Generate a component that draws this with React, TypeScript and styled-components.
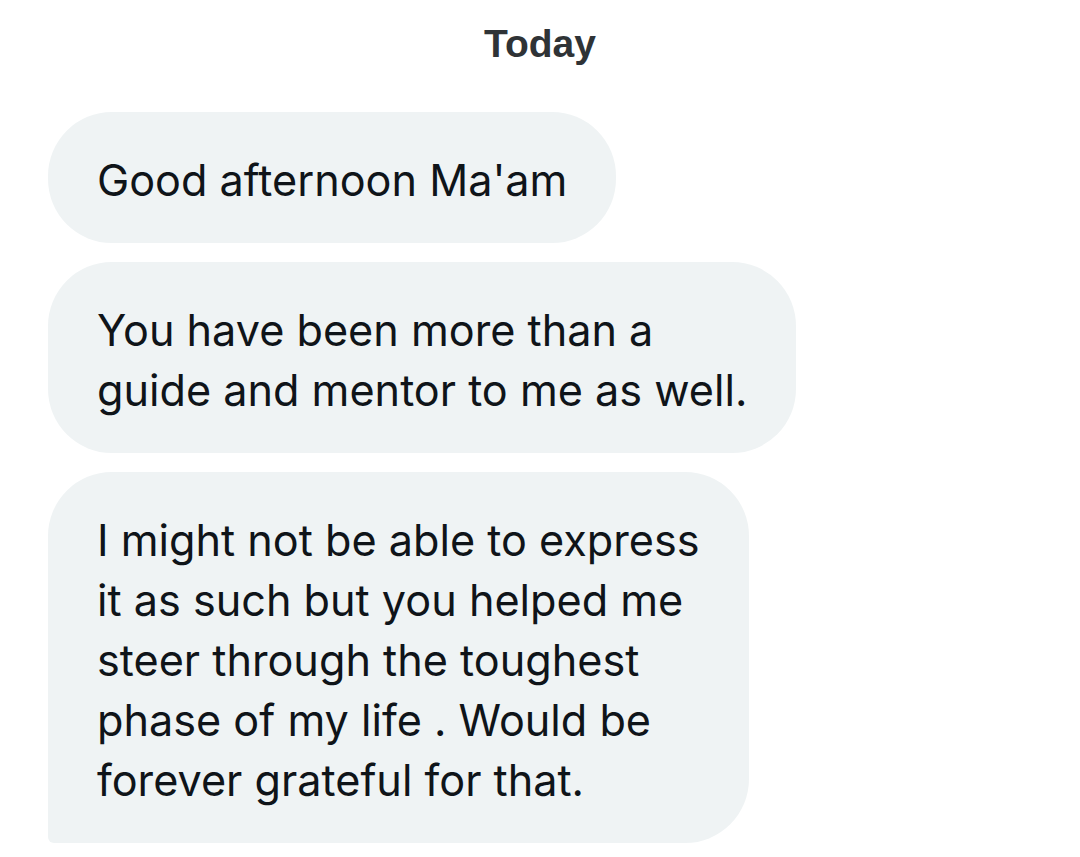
import React from "react";
import styled, { createGlobalStyle } from "styled-components";

const GlobalStyle = createGlobalStyle`
  html, body {
    margin: 0;
    padding: 0;
    background: #ffffff;
  }
  body {
    font-family: Inter, "Noto Sans", sans-serif;
  }
`;

const Page = styled.div`
  width: 1080px;
  height: 857px;
  overflow: hidden;
  background: #ffffff;
`;

const DayLabel = styled.div`
  height: 88px;
  display: flex;
  align-items: center;
  justify-content: center;
  font-family: "Liberation Sans", Arial, sans-serif;
  font-weight: 700;
  font-size: 39px;
  color: #2f3336;
`;

const Thread = styled.div`
  display: flex;
  flex-direction: column;
  align-items: flex-start;
  gap: 19px;
  padding: 24px 0 0 48px;
`;

const Bubble = styled.div<{ $last?: boolean }>`
  box-sizing: border-box;
  padding: 38px 49px 33px 49px;
  background: #eff3f4;
  color: #0f1419;
  font-size: 43.2px;
  line-height: 60px;
  white-space: pre-line;
  border-radius: ${(p) => (p.$last ? "64px 64px 64px 6px" : "64px")};
`;

const messages = [
  "Good afternoon Ma'am",
  "You have been more than a\nguide and mentor to me as well.",
  "I might not be able to express\nit as such but you helped me\nsteer through the toughest\nphase of my life . Would be\nforever grateful for that.",
];

export default function App() {
  return (
    <Page>
      <GlobalStyle />
      <DayLabel>Today</DayLabel>
      <Thread>
        {messages.map((m, i) => (
          <Bubble key={i} $last={i === messages.length - 1}>
            {m}
          </Bubble>
        ))}
      </Thread>
    </Page>
  );
}
